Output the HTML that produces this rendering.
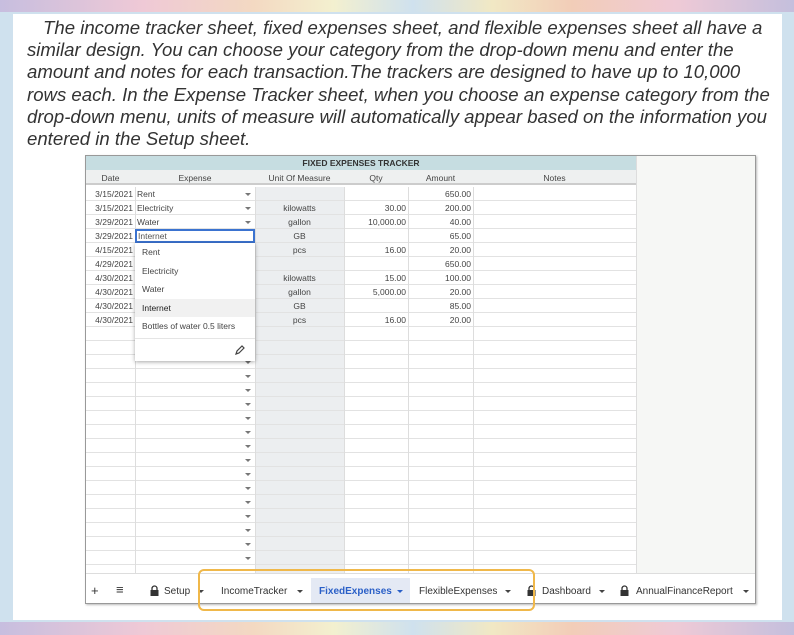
<!DOCTYPE html>
<html><head><style>
*{margin:0;padding:0;box-sizing:border-box}
body{width:794px;height:635px;overflow:hidden;background:#cfe1ee;position:relative;font-family:"Liberation Sans",sans-serif}
.rb{position:absolute;left:0;width:794px;background:linear-gradient(90deg,#c7bedf 0%,#efc9d6 18%,#f3d9c2 32%,#f3f0cf 42%,#cfe1ee 52%,#f1e8c4 62%,#f2cdb8 72%,#efcad6 85%,#c4bfdd 100%)}
.panel{position:absolute;left:13px;top:14px;width:769px;height:606px;background:#fff}
p.t{position:absolute;left:27px;top:17px;width:750px;font-style:italic;font-size:18.6px;line-height:22.2px;color:#333;text-indent:16px}
.a{position:absolute;font-size:8.5px;color:#444;white-space:nowrap;line-height:14px}
.r{text-align:right}
.arr{position:absolute;width:0;height:0;border-left:3px solid transparent;border-right:3px solid transparent;border-top:3px solid #777}
</style></head><body>
<div class="rb" style="top:0;height:12px"></div>
<div class="rb" style="top:622px;height:13px"></div>
<div class="panel"></div>
<p class="t">The income tracker sheet, fixed expenses sheet, and flexible expenses sheet all have a similar design. You can choose your category from the drop-down menu and enter the amount and notes for each transaction.The trackers are designed to have up to 10,000 rows each. In the Expense Tracker sheet, when you choose an expense category from the drop-down menu, units of measure will automatically appear based on the information you entered in the Setup sheet.</p>

<div style="position:absolute;left:85px;top:155px;width:671px;height:449px;border:1px solid #999;background:#fff;box-shadow:1px 1px 2px #bbb;overflow:hidden">
 <div style="position:absolute;left:0;top:0;width:550px;height:14px;background:#c6dde1"></div>
 <div class="a" style="left:0;top:0;width:550px;text-align:center;font-weight:bold;color:#333">FIXED EXPENSES TRACKER</div>
 <div style="position:absolute;left:0;top:14px;width:550px;height:15px;background:#eef0f0;border-bottom:2px solid #ccc"></div>
 <div class="a" style="left:0;top:15px;width:49px;text-align:center">Date</div>
 <div class="a" style="left:49px;top:15px;width:120px;text-align:center">Expense</div>
 <div class="a" style="left:169px;top:15px;width:89px;text-align:center">Unit Of Measure</div>
 <div class="a" style="left:258px;top:15px;width:64px;text-align:center">Qty</div>
 <div class="a" style="left:322px;top:15px;width:65px;text-align:center">Amount</div>
 <div class="a" style="left:387px;top:15px;width:163px;text-align:center">Notes</div>
 <div style="position:absolute;left:550px;top:0;width:121px;height:418px;background:#f6f7f5;border-left:1px solid #ddd"></div>
 <div style="position:absolute;left:169px;top:31px;width:89px;height:386px;background:#eceef0"></div>
 <div style="position:absolute;left:0;top:31px;width:550px;height:386px;background:repeating-linear-gradient(180deg,transparent 0 13px,#e2e2e2 13px 14px)"></div>
 <div style="position:absolute;left:49px;top:31px;width:1px;height:386px;background:#ddd"></div>
 <div style="position:absolute;left:169px;top:31px;width:1px;height:386px;background:#ddd"></div>
 <div style="position:absolute;left:258px;top:31px;width:1px;height:386px;background:#ddd"></div>
 <div style="position:absolute;left:322px;top:31px;width:1px;height:386px;background:#ddd"></div>
 <div style="position:absolute;left:387px;top:31px;width:1px;height:386px;background:#ddd"></div>
 <div style="position:absolute;left:0;top:417px;width:671px;height:32px;background:#fff;border-top:1px solid #ddd"></div>

 <div class="a r" style="left:0;top:31px;width:47px;line-height:14px">3/15/2021<br>3/15/2021<br>3/29/2021<br>3/29/2021<br>4/15/2021<br>4/29/2021<br>4/30/2021<br>4/30/2021<br>4/30/2021<br>4/30/2021</div>
 <div class="a" style="left:51px;top:31px">Rent<br>Electricity<br>Water</div>
 <div class="a" style="left:169px;top:31px;width:89px;text-align:center">&nbsp;<br>kilowatts<br>gallon<br>GB<br>pcs<br>&nbsp;<br>kilowatts<br>gallon<br>GB<br>pcs</div>
 <div class="a r" style="left:258px;top:31px;width:62px">&nbsp;<br>30.00<br>10,000.00<br>&nbsp;<br>16.00<br>&nbsp;<br>15.00<br>5,000.00<br>&nbsp;<br>16.00</div>
 <div class="a r" style="left:322px;top:31px;width:63px">650.00<br>200.00<br>40.00<br>65.00<br>20.00<br>650.00<br>100.00<br>20.00<br>85.00<br>20.00</div>

 <div class="arr" style="left:159px;top:37px"></div>
 <div class="arr" style="left:159px;top:51px"></div>
 <div class="arr" style="left:159px;top:65px"></div>
 <div class="arr" style="left:159px;top:205px"></div>
 <div class="arr" style="left:159px;top:219px"></div>
 <div class="arr" style="left:159px;top:233px"></div>
 <div class="arr" style="left:159px;top:247px"></div>
 <div class="arr" style="left:159px;top:261px"></div>
 <div class="arr" style="left:159px;top:275px"></div>
 <div class="arr" style="left:159px;top:289px"></div>
 <div class="arr" style="left:159px;top:303px"></div>
 <div class="arr" style="left:159px;top:317px"></div>
 <div class="arr" style="left:159px;top:331px"></div>
 <div class="arr" style="left:159px;top:345px"></div>
 <div class="arr" style="left:159px;top:359px"></div>
 <div class="arr" style="left:159px;top:373px"></div>
 <div class="arr" style="left:159px;top:387px"></div>
 <div class="arr" style="left:159px;top:401px"></div>

 <div style="position:absolute;left:49px;top:73px;width:120px;height:14px;border:2px solid #3b73d0;background:#fff"></div>
 <div class="a" style="left:52px;top:73px;color:#555">Internet</div>
 <div style="position:absolute;left:49px;top:87px;width:120px;height:118px;background:#fff;box-shadow:0 1px 4px rgba(0,0,0,.35)">
  <div class="a" style="left:7px;top:2px">Rent</div>
  <div class="a" style="left:7px;top:21px">Electricity</div>
  <div class="a" style="left:7px;top:39px">Water</div>
  <div style="position:absolute;left:0;top:56px;width:120px;height:18px;background:#f1f1f1"></div>
  <div class="a" style="left:7px;top:58px;color:#222">Internet</div>
  <div class="a" style="left:7px;top:76px">Bottles of water 0.5 liters</div>
  <div style="position:absolute;left:0;top:95px;width:120px;height:1px;background:#e5e5e5"></div>
  <svg style="position:absolute;left:100px;top:102px" width="10" height="10" viewBox="0 0 10 10"><path d="M1 9 L2 6 L7 1 L9 3 L4 8 Z" fill="none" stroke="#444" stroke-width="1.2"/></svg>
 </div>

 <div style="position:absolute;left:0;top:422px;width:671px;height:27px;font-size:10px;color:#333">
  <span style="position:absolute;left:5px;top:5px;font-size:13px">+</span>
  <span style="position:absolute;left:30px;top:4px;font-size:13px">≡</span>
  <svg style="position:absolute;left:64px;top:7px" width="9" height="11" viewBox="0 0 9 11"><path d="M2 5V3.5a2.5 2.5 0 0 1 5 0V5" fill="none" stroke="#333" stroke-width="1.3"/><rect x="0.5" y="5" width="8" height="6" fill="#333"/></svg>
  <span style="position:absolute;left:78px;top:8px">Setup</span>
  <div class="arr" style="left:112px;top:12px;border-top-color:#444"></div>
  <span style="position:absolute;left:135px;top:8px">IncomeTracker</span>
  <div class="arr" style="left:211px;top:12px;border-top-color:#444"></div>
  <div style="position:absolute;left:225px;top:0;width:99px;height:27px;background:#e4e9f4"></div>
  <span style="position:absolute;left:233px;top:8px;color:#2a5fc7;font-weight:bold">FixedExpenses</span>
  <div class="arr" style="left:311px;top:12px;border-top-color:#2a5fc7"></div>
  <span style="position:absolute;left:333px;top:8px">FlexibleExpenses</span>
  <div class="arr" style="left:419px;top:12px;border-top-color:#444"></div>
  <svg style="position:absolute;left:441px;top:7px" width="9" height="11" viewBox="0 0 9 11"><path d="M2 5V3.5a2.5 2.5 0 0 1 5 0V5" fill="none" stroke="#333" stroke-width="1.3"/><rect x="0.5" y="5" width="8" height="6" fill="#333"/></svg>
  <span style="position:absolute;left:456px;top:8px">Dashboard</span>
  <div class="arr" style="left:513px;top:12px;border-top-color:#444"></div>
  <svg style="position:absolute;left:534px;top:7px" width="9" height="11" viewBox="0 0 9 11"><path d="M2 5V3.5a2.5 2.5 0 0 1 5 0V5" fill="none" stroke="#333" stroke-width="1.3"/><rect x="0.5" y="5" width="8" height="6" fill="#333"/></svg>
  <span style="position:absolute;left:550px;top:8px">AnnualFinanceReport</span>
  <div class="arr" style="left:657px;top:12px;border-top-color:#444"></div>
 </div>
</div>
<div style="position:absolute;left:198px;top:569px;width:337px;height:42px;border:2.5px solid #f0b84a;border-radius:6px"></div>
</body></html>
